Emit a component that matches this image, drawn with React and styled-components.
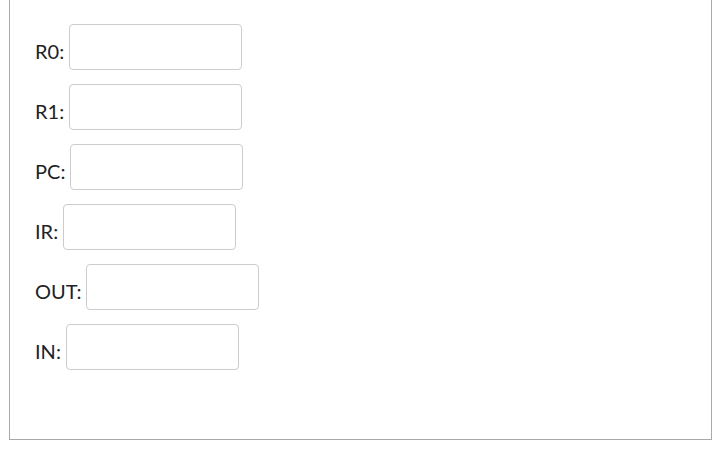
import React from 'react'
import styled, { createGlobalStyle } from 'styled-components'

const GlobalStyle = createGlobalStyle`
  body {
    margin: 0;
    background: #fff;
    font-family: Lato, "Open Sans", sans-serif;
    color: #222;
  }
`

const Panel = styled.div`
  margin: 0 13px 0 9px;
  border: 1px solid #aaa;
  border-top: none;
  padding: 24px 25px 69px;
  display: flex;
  flex-direction: column;
  gap: 14px;
`

const Row = styled.div`
  display: flex;
  align-items: flex-end;
  gap: 5px;
`

const Label = styled.label`
  font-size: 20px;
  line-height: 24px;
  padding-bottom: 7px;
`

const Field = styled.input`
  box-sizing: border-box;
  width: 173px;
  height: 46px;
  border: 1px solid #ccc;
  border-radius: 4px;
  padding: 0 10px;
  font-family: inherit;
  font-size: 16px;
  background: #fff;
  outline: none;
`

const registers = ['R0', 'R1', 'PC', 'IR', 'OUT', 'IN']

export default function App() {
  return (
    <>
      <GlobalStyle />
      <Panel>
        {registers.map(name => (
          <Row key={name}>
            <Label htmlFor={'reg-' + name}>{name}:</Label>
            <Field id={'reg-' + name} type="text" />
          </Row>
        ))}
      </Panel>
    </>
  )
}
